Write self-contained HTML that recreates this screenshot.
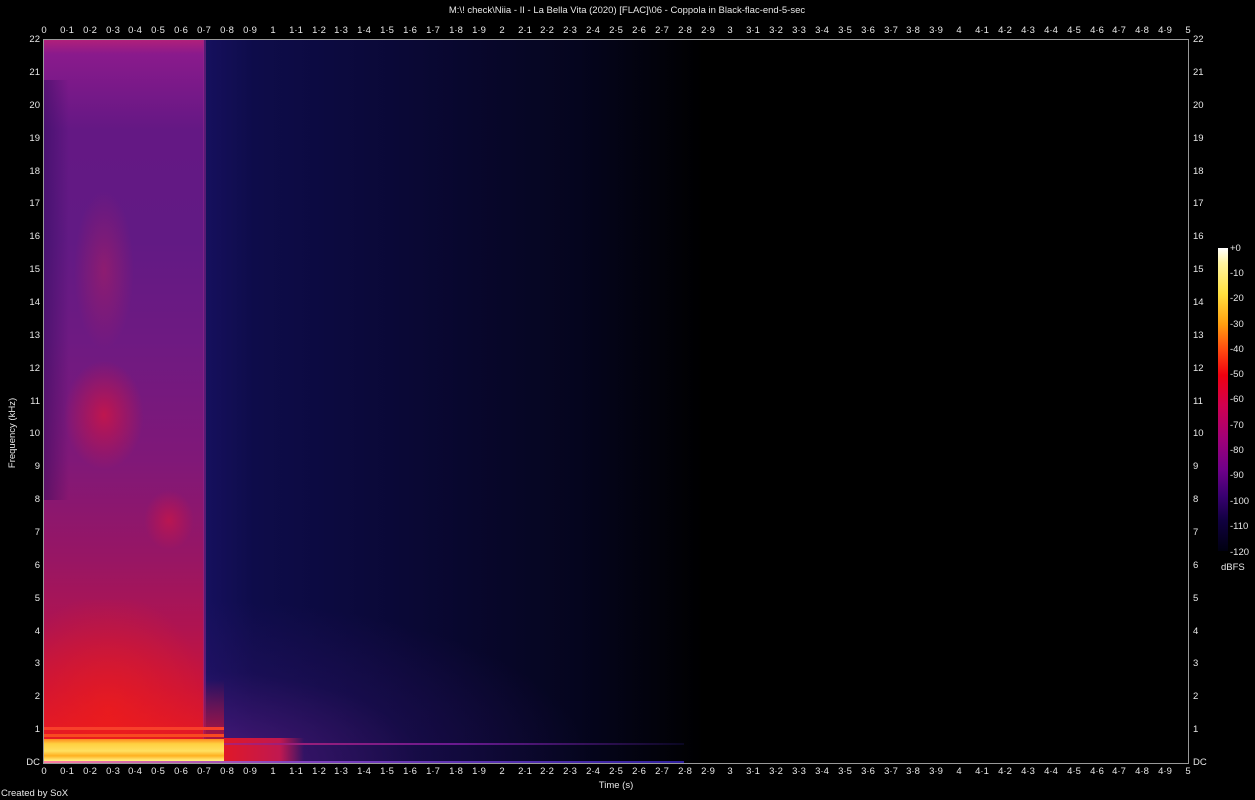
<!DOCTYPE html>
<html><head><meta charset="utf-8"><style>
body{margin:0;background:#000;width:1255px;height:800px;overflow:hidden;position:relative;font-family:"Liberation Sans",sans-serif;color:#e8e8e8;font-size:9.5px}
.a{position:absolute;white-space:nowrap;line-height:10px}
.t{transform:translateX(-50%)}
.l{width:30px;text-align:right;transform:translateY(-50%)}
.r{transform:translateY(-50%)}
#plot{position:absolute;left:44px;top:40px;width:1144px;height:723px;overflow:hidden;background:#000}
#plot div{position:absolute}
</style></head><body>
<div class="a t" style="left:627px;top:6px">M:\! check\Niia - II - La Bella Vita (2020) [FLAC]\06 - Coppola in Black-flac-end-5-sec</div>
<div id="plot">
<div style="left:160px;top:0;width:500px;height:723px;background:linear-gradient(90deg,#16105e 0%,#0e0c4a 10%,#0a0836 40%,#05051e 75%,#000 100%)"></div>
<div style="left:160px;top:520px;width:480px;height:203px;background:radial-gradient(ellipse 100% 100% at 0% 100%,rgba(100,30,140,.7),rgba(50,20,110,.3) 45%,rgba(0,0,0,0) 80%)"></div>
<div style="left:0;top:0;width:160px;height:723px;background:linear-gradient(180deg,#b0207a 0px,#8a1a8c 14px,#641884 90px,#621a84 200px,#6e1a82 300px,#801878 420px,#981664 520px,#b01450 590px,#cc1438 650px,#e01828 690px)"></div>
<div style="left:0;top:40px;width:25px;height:420px;background:linear-gradient(90deg,rgba(40,10,90,.45),rgba(40,10,90,0)),linear-gradient(180deg,rgba(0,0,0,0),rgba(0,0,0,0))"></div>
<div style="left:20px;top:320px;width:80px;height:110px;background:radial-gradient(ellipse at center,rgba(220,20,60,.7),rgba(220,20,60,0) 70%)"></div>
<div style="left:30px;top:150px;width:60px;height:160px;background:radial-gradient(ellipse at center,rgba(190,30,90,.45),rgba(190,30,90,0) 70%)"></div>
<div style="left:100px;top:450px;width:50px;height:60px;background:radial-gradient(ellipse at center,rgba(220,20,60,.55),rgba(220,20,60,0) 70%)"></div>
<div style="left:0;top:560px;width:160px;height:140px;background:radial-gradient(ellipse at 40% 80%,rgba(245,30,20,.6),rgba(245,30,20,0) 75%)"></div>
<div style="left:159px;top:0;width:3px;height:723px;background:rgba(150,40,140,.5)"></div>
<div style="left:160px;top:640px;width:20px;height:60px;background:linear-gradient(180deg,rgba(180,20,80,0),rgba(200,20,50,.8))"></div>
<div style="left:0;top:687px;width:180px;height:3px;background:#f8402a"></div>
<div style="left:0;top:694px;width:180px;height:3px;background:#f84a20"></div>
<div style="left:0;top:699px;width:180px;height:24px;background:linear-gradient(180deg,#ff8a20,#ffd040 20%,#ffe060 50%,#ffb020 70%,#fff080 90%,#ffd040)"></div>
<div style="left:180px;top:698px;width:80px;height:25px;background:linear-gradient(90deg,#e01828,#c01850 70%,rgba(120,20,120,0))"></div>
<div style="left:180px;top:703px;width:460px;height:2px;background:linear-gradient(90deg,#b02070,#6a1a90 50%,rgba(30,20,100,.3))"></div>
<div style="left:0;top:721px;width:640px;height:2px;background:linear-gradient(90deg,#ff80a0,#8040c0 40%,#3020a0)"></div>
</div>
<div style="position:absolute;left:43px;top:39px;width:1px;height:725px;background:#999"></div>
<div style="position:absolute;left:1188px;top:39px;width:1px;height:725px;background:#999"></div>
<div style="position:absolute;left:43px;top:763px;width:1146px;height:1px;background:#999"></div>
<div style="position:absolute;left:43px;top:39px;width:1146px;height:1px;background:#999"></div>
<div class="a t" style="left:44px;top:26px">0</div><div class="a t" style="left:67px;top:26px">0·1</div><div class="a t" style="left:90px;top:26px">0·2</div><div class="a t" style="left:113px;top:26px">0·3</div><div class="a t" style="left:135px;top:26px">0·4</div><div class="a t" style="left:158px;top:26px">0·5</div><div class="a t" style="left:181px;top:26px">0·6</div><div class="a t" style="left:204px;top:26px">0·7</div><div class="a t" style="left:227px;top:26px">0·8</div><div class="a t" style="left:250px;top:26px">0·9</div><div class="a t" style="left:273px;top:26px">1</div><div class="a t" style="left:296px;top:26px">1·1</div><div class="a t" style="left:319px;top:26px">1·2</div><div class="a t" style="left:341px;top:26px">1·3</div><div class="a t" style="left:364px;top:26px">1·4</div><div class="a t" style="left:387px;top:26px">1·5</div><div class="a t" style="left:410px;top:26px">1·6</div><div class="a t" style="left:433px;top:26px">1·7</div><div class="a t" style="left:456px;top:26px">1·8</div><div class="a t" style="left:479px;top:26px">1·9</div><div class="a t" style="left:502px;top:26px">2</div><div class="a t" style="left:525px;top:26px">2·1</div><div class="a t" style="left:547px;top:26px">2·2</div><div class="a t" style="left:570px;top:26px">2·3</div><div class="a t" style="left:593px;top:26px">2·4</div><div class="a t" style="left:616px;top:26px">2·5</div><div class="a t" style="left:639px;top:26px">2·6</div><div class="a t" style="left:662px;top:26px">2·7</div><div class="a t" style="left:685px;top:26px">2·8</div><div class="a t" style="left:708px;top:26px">2·9</div><div class="a t" style="left:730px;top:26px">3</div><div class="a t" style="left:753px;top:26px">3·1</div><div class="a t" style="left:776px;top:26px">3·2</div><div class="a t" style="left:799px;top:26px">3·3</div><div class="a t" style="left:822px;top:26px">3·4</div><div class="a t" style="left:845px;top:26px">3·5</div><div class="a t" style="left:868px;top:26px">3·6</div><div class="a t" style="left:891px;top:26px">3·7</div><div class="a t" style="left:913px;top:26px">3·8</div><div class="a t" style="left:936px;top:26px">3·9</div><div class="a t" style="left:959px;top:26px">4</div><div class="a t" style="left:982px;top:26px">4·1</div><div class="a t" style="left:1005px;top:26px">4·2</div><div class="a t" style="left:1028px;top:26px">4·3</div><div class="a t" style="left:1051px;top:26px">4·4</div><div class="a t" style="left:1074px;top:26px">4·5</div><div class="a t" style="left:1097px;top:26px">4·6</div><div class="a t" style="left:1119px;top:26px">4·7</div><div class="a t" style="left:1142px;top:26px">4·8</div><div class="a t" style="left:1165px;top:26px">4·9</div><div class="a t" style="left:1188px;top:26px">5</div>
<div class="a t" style="left:44px;top:767px">0</div><div class="a t" style="left:67px;top:767px">0·1</div><div class="a t" style="left:90px;top:767px">0·2</div><div class="a t" style="left:113px;top:767px">0·3</div><div class="a t" style="left:135px;top:767px">0·4</div><div class="a t" style="left:158px;top:767px">0·5</div><div class="a t" style="left:181px;top:767px">0·6</div><div class="a t" style="left:204px;top:767px">0·7</div><div class="a t" style="left:227px;top:767px">0·8</div><div class="a t" style="left:250px;top:767px">0·9</div><div class="a t" style="left:273px;top:767px">1</div><div class="a t" style="left:296px;top:767px">1·1</div><div class="a t" style="left:319px;top:767px">1·2</div><div class="a t" style="left:341px;top:767px">1·3</div><div class="a t" style="left:364px;top:767px">1·4</div><div class="a t" style="left:387px;top:767px">1·5</div><div class="a t" style="left:410px;top:767px">1·6</div><div class="a t" style="left:433px;top:767px">1·7</div><div class="a t" style="left:456px;top:767px">1·8</div><div class="a t" style="left:479px;top:767px">1·9</div><div class="a t" style="left:502px;top:767px">2</div><div class="a t" style="left:525px;top:767px">2·1</div><div class="a t" style="left:547px;top:767px">2·2</div><div class="a t" style="left:570px;top:767px">2·3</div><div class="a t" style="left:593px;top:767px">2·4</div><div class="a t" style="left:616px;top:767px">2·5</div><div class="a t" style="left:639px;top:767px">2·6</div><div class="a t" style="left:662px;top:767px">2·7</div><div class="a t" style="left:685px;top:767px">2·8</div><div class="a t" style="left:708px;top:767px">2·9</div><div class="a t" style="left:730px;top:767px">3</div><div class="a t" style="left:753px;top:767px">3·1</div><div class="a t" style="left:776px;top:767px">3·2</div><div class="a t" style="left:799px;top:767px">3·3</div><div class="a t" style="left:822px;top:767px">3·4</div><div class="a t" style="left:845px;top:767px">3·5</div><div class="a t" style="left:868px;top:767px">3·6</div><div class="a t" style="left:891px;top:767px">3·7</div><div class="a t" style="left:913px;top:767px">3·8</div><div class="a t" style="left:936px;top:767px">3·9</div><div class="a t" style="left:959px;top:767px">4</div><div class="a t" style="left:982px;top:767px">4·1</div><div class="a t" style="left:1005px;top:767px">4·2</div><div class="a t" style="left:1028px;top:767px">4·3</div><div class="a t" style="left:1051px;top:767px">4·4</div><div class="a t" style="left:1074px;top:767px">4·5</div><div class="a t" style="left:1097px;top:767px">4·6</div><div class="a t" style="left:1119px;top:767px">4·7</div><div class="a t" style="left:1142px;top:767px">4·8</div><div class="a t" style="left:1165px;top:767px">4·9</div><div class="a t" style="left:1188px;top:767px">5</div>
<div class="a t" style="left:616px;top:781px">Time (s)</div>
<div class="a" style="left:1px;top:789px">Created by SoX</div>
<div class="a l" style="left:10px;top:40px">22</div><div class="a l" style="left:10px;top:73px">21</div><div class="a l" style="left:10px;top:106px">20</div><div class="a l" style="left:10px;top:139px">19</div><div class="a l" style="left:10px;top:172px">18</div><div class="a l" style="left:10px;top:204px">17</div><div class="a l" style="left:10px;top:237px">16</div><div class="a l" style="left:10px;top:270px">15</div><div class="a l" style="left:10px;top:303px">14</div><div class="a l" style="left:10px;top:336px">13</div><div class="a l" style="left:10px;top:369px">12</div><div class="a l" style="left:10px;top:402px">11</div><div class="a l" style="left:10px;top:434px">10</div><div class="a l" style="left:10px;top:467px">9</div><div class="a l" style="left:10px;top:500px">8</div><div class="a l" style="left:10px;top:533px">7</div><div class="a l" style="left:10px;top:566px">6</div><div class="a l" style="left:10px;top:599px">5</div><div class="a l" style="left:10px;top:632px">4</div><div class="a l" style="left:10px;top:664px">3</div><div class="a l" style="left:10px;top:697px">2</div><div class="a l" style="left:10px;top:730px">1</div><div class="a l" style="left:10px;top:763px">DC</div>
<div class="a r" style="left:1193px;top:40px">22</div><div class="a r" style="left:1193px;top:73px">21</div><div class="a r" style="left:1193px;top:106px">20</div><div class="a r" style="left:1193px;top:139px">19</div><div class="a r" style="left:1193px;top:172px">18</div><div class="a r" style="left:1193px;top:204px">17</div><div class="a r" style="left:1193px;top:237px">16</div><div class="a r" style="left:1193px;top:270px">15</div><div class="a r" style="left:1193px;top:303px">14</div><div class="a r" style="left:1193px;top:336px">13</div><div class="a r" style="left:1193px;top:369px">12</div><div class="a r" style="left:1193px;top:402px">11</div><div class="a r" style="left:1193px;top:434px">10</div><div class="a r" style="left:1193px;top:467px">9</div><div class="a r" style="left:1193px;top:500px">8</div><div class="a r" style="left:1193px;top:533px">7</div><div class="a r" style="left:1193px;top:566px">6</div><div class="a r" style="left:1193px;top:599px">5</div><div class="a r" style="left:1193px;top:632px">4</div><div class="a r" style="left:1193px;top:664px">3</div><div class="a r" style="left:1193px;top:697px">2</div><div class="a r" style="left:1193px;top:730px">1</div><div class="a r" style="left:1193px;top:763px">DC</div>
<div class="a" style="top:433px;transform:translate(-50%,-50%) rotate(-90deg);left:13px">Frequency (kHz)</div>
<div style="position:absolute;left:1218px;top:248px;width:10px;height:303px;background:linear-gradient(180deg,#fff 0%,#fff4a0 5%,#ffe040 15%,#ffa010 25%,#ff5010 33%,#f00010 42%,#d00050 52%,#a00078 63%,#70008a 73%,#380070 82%,#100040 90%,#000010 100%)"></div>
<div class="a r" style="left:1230px;top:249px">+0</div><div class="a r" style="left:1230px;top:274px">-10</div><div class="a r" style="left:1230px;top:299px">-20</div><div class="a r" style="left:1230px;top:325px">-30</div><div class="a r" style="left:1230px;top:350px">-40</div><div class="a r" style="left:1230px;top:375px">-50</div><div class="a r" style="left:1230px;top:400px">-60</div><div class="a r" style="left:1230px;top:426px">-70</div><div class="a r" style="left:1230px;top:451px">-80</div><div class="a r" style="left:1230px;top:476px">-90</div><div class="a r" style="left:1230px;top:502px">-100</div><div class="a r" style="left:1230px;top:527px">-110</div><div class="a r" style="left:1230px;top:553px">-120</div>
<div class="a" style="left:1221px;top:563px">dBFS</div>
</body></html>
